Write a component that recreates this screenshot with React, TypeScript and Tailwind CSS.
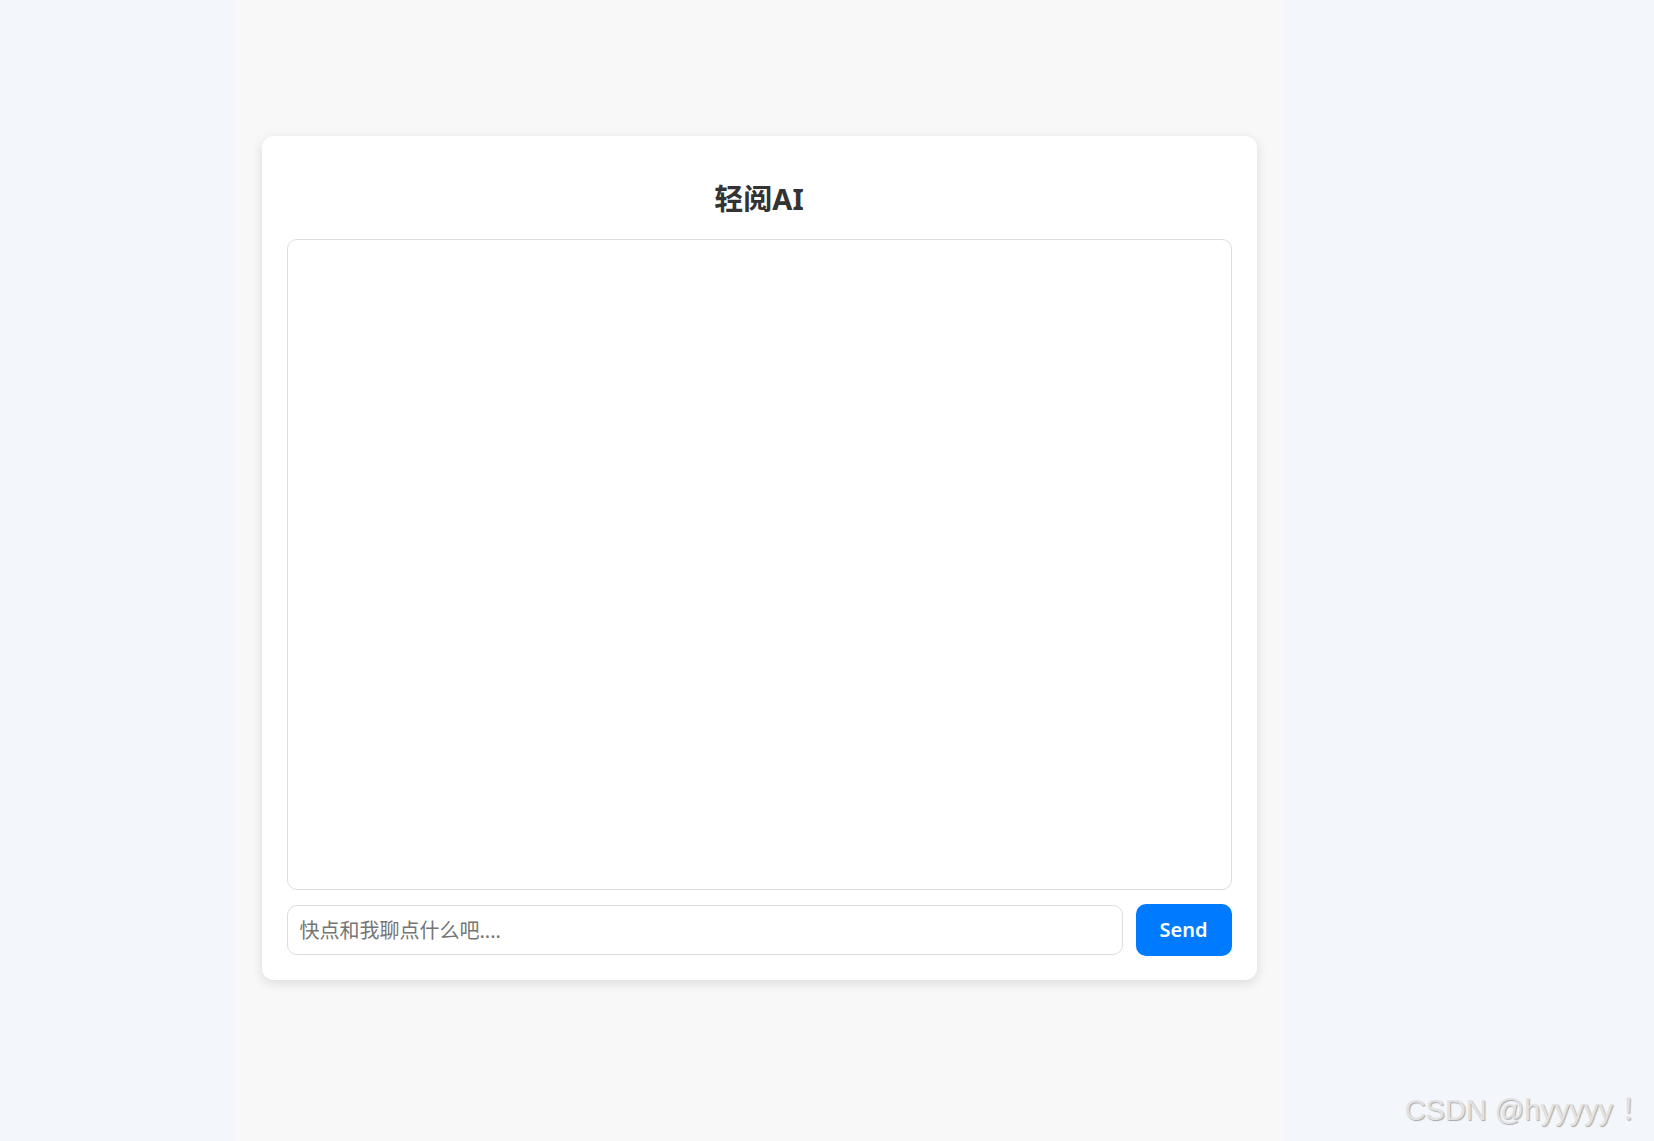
import { useState } from 'react';

export default function App() {
  const [text, setText] = useState('');

  return (
    <div className="relative flex w-[1654px] h-[1141px] overflow-hidden font-['Noto_Sans','Noto_Sans_CJK_SC',sans-serif]">
      <div className="w-[234px] bg-[#f3f6fb]" />
      <div className="w-[1050px] bg-[#f8f8f8] pt-[136px]">
        <div className="mx-auto w-[995px] bg-white rounded-[12px] shadow-[0_3px_12px_rgba(0,0,0,0.12)] px-[25px] pt-[25px] pb-[24px]">
          <div className="h-[78px] pb-[4px] flex items-center justify-center">
            <h1 className="text-[29px] font-bold text-[#333] leading-none">轻阅AI</h1>
          </div>
          <div className="h-[651px] border border-[#ddd] rounded-[10px] bg-white overflow-y-auto" />
          <div className="mt-[14px] flex items-center gap-[13px]">
            <input
              value={text}
              onChange={e => setText(e.target.value)}
              placeholder="快点和我聊点什么吧...."
              className="flex-1 h-[50px] border border-[#ddd] rounded-[10px] px-[12px] text-[20px] text-[#333] placeholder:text-[#757575] outline-none bg-white"
            />
            <button className="w-[96px] h-[52px] bg-[#007bff] rounded-[10px] text-white text-[20px] font-semibold">
              Send
            </button>
          </div>
        </div>
      </div>
      <div className="flex-1 bg-[#f3f6fb]" />
      <div className="absolute right-[4px] bottom-[16px] text-[29px] text-[#e2e2e2] font-['Liberation_Sans','Noto_Sans_CJK_SC',sans-serif] [text-shadow:1px_1px_1px_#a8a8a8] leading-none whitespace-pre">
        CSDN @hyyyyy ！
      </div>
    </div>
  );
}
